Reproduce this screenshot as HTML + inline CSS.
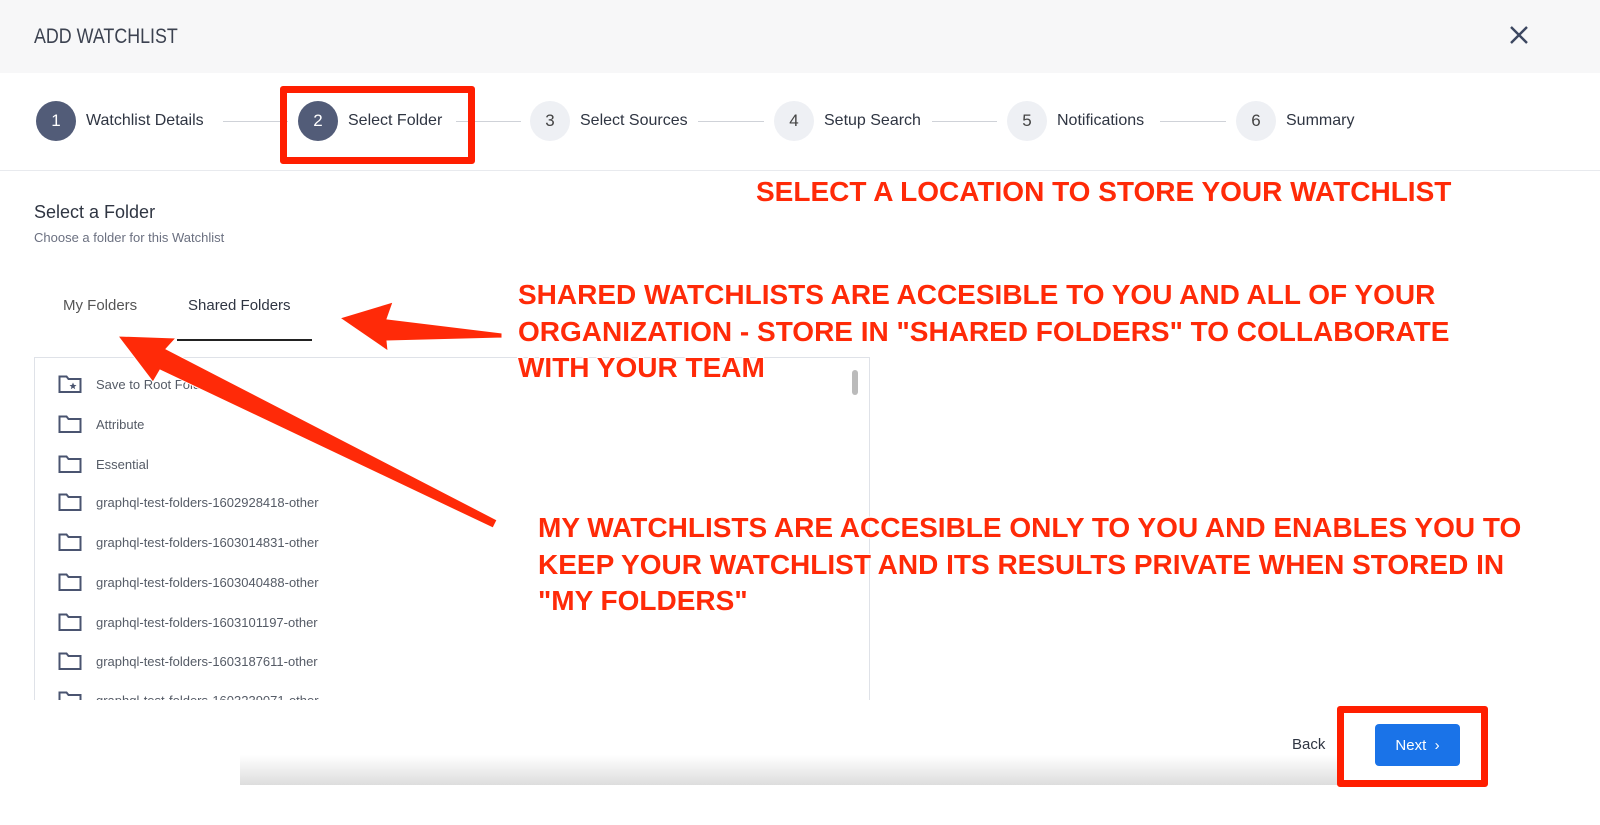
<!DOCTYPE html>
<html><head><meta charset="utf-8"><style>
body{margin:0;width:1600px;height:825px;background:#fff;font-family:"Liberation Sans",sans-serif;position:relative;overflow:hidden}
.hdr{position:absolute;left:0;top:0;width:1600px;height:73px;background:#f7f7f8}
.hdr .t{position:absolute;left:34px;top:25px;font-size:21px;color:#3c4250;transform:scaleX(.85);transform-origin:left}
.x{position:absolute;left:1508px;top:24px}
.step{position:absolute;top:101px;height:40px;display:flex;align-items:center;font-size:16px;color:#2f3542}
.c{width:40px;height:40px;border-radius:50%;background:#eef0f4;color:#444;display:flex;align-items:center;justify-content:center;font-size:17px;margin-right:10px}
.c.a{background:#525c78;color:#fff}
.line{position:absolute;top:121px;height:1px;background:#cfd2d8}
.sep{position:absolute;top:170px;left:0;width:1600px;height:1px;background:#e8eaee}
.ann{position:absolute;color:#ff2a08;font-weight:bold;font-size:28px;line-height:36.5px;text-shadow:-1px -1px 0 #fff,1px -1px 0 #fff,-1px 1px 0 #fff,1px 1px 0 #fff,0 0 3px #fff;white-space:nowrap}
.box{position:absolute;left:34px;top:357px;width:834px;height:343px;border:1px solid #dfe2e8;border-bottom:none}
.row{position:absolute;left:58px;height:20px;display:flex;align-items:center;font-size:13px;color:#555b66}
.row svg{margin-right:14px}
.red{position:absolute;border:7px solid #ff1e00;border-radius:3px}
</style></head><body>
<div class="hdr"><div class="t">ADD WATCHLIST</div>
<svg class="x" width="22" height="22" viewBox="0 0 22 22"><path d="M3 3L19 19M19 3L3 19" stroke="#3c4760" stroke-width="2.4"/></svg></div>

<div class="step" style="left:36px"><div class="c a">1</div>Watchlist Details</div>
<div class="line" style="left:223px;width:65px"></div>
<div class="step" style="left:298px"><div class="c a">2</div>Select Folder</div>
<div class="line" style="left:456px;width:65px"></div>
<div class="step" style="left:530px"><div class="c">3</div>Select Sources</div>
<div class="line" style="left:698px;width:66px"></div>
<div class="step" style="left:774px"><div class="c">4</div>Setup Search</div>
<div class="line" style="left:932px;width:65px"></div>
<div class="step" style="left:1007px"><div class="c">5</div>Notifications</div>
<div class="line" style="left:1160px;width:66px"></div>
<div class="step" style="left:1236px"><div class="c">6</div>Summary</div>
<div class="red" style="left:280px;top:86px;width:181px;height:64px"></div>
<div class="sep"></div>

<div style="position:absolute;left:34px;top:202px;font-size:18px;color:#2f3542">Select a Folder</div>
<div style="position:absolute;left:34px;top:230px;font-size:13px;color:#6b7080">Choose a folder for this Watchlist</div>

<div style="position:absolute;left:63px;top:297px;font-size:15px;color:#555">My Folders</div>
<div style="position:absolute;left:188px;top:297px;font-size:15px;color:#2f3542">Shared Folders</div>
<div style="position:absolute;left:177px;top:339px;width:135px;height:2px;background:#222"></div>

<div class="box"></div>
<div style="position:absolute;left:852px;top:370px;width:6px;height:25px;border-radius:3px;background:#bbb"></div>
<div class="row" style="top:374px"><svg width="24" height="20" viewBox="0 0 24 20"><path d="M1.5 2.5h7l2 2.5h12v13h-21z" fill="none" stroke="#4a5470" stroke-width="2"/><path d="M15 8.5l1 2.4 2.5.2-2 1.6.7 2.5-2.2-1.4-2.2 1.4.7-2.5-2-1.6 2.5-.2z" fill="#4a5470"/></svg>Save to Root Folder</div>
<div class="row" style="top:414px"><svg width="24" height="20" viewBox="0 0 24 20"><path d="M1.5 2.5h7l2 2.5h12v13h-21z" fill="none" stroke="#4a5470" stroke-width="2"/></svg>Attribute</div>
<div class="row" style="top:454px"><svg width="24" height="20" viewBox="0 0 24 20"><path d="M1.5 2.5h7l2 2.5h12v13h-21z" fill="none" stroke="#4a5470" stroke-width="2"/></svg>Essential</div>
<div class="row" style="top:492px"><svg width="24" height="20" viewBox="0 0 24 20"><path d="M1.5 2.5h7l2 2.5h12v13h-21z" fill="none" stroke="#4a5470" stroke-width="2"/></svg>graphql-test-folders-1602928418-other</div>
<div class="row" style="top:532px"><svg width="24" height="20" viewBox="0 0 24 20"><path d="M1.5 2.5h7l2 2.5h12v13h-21z" fill="none" stroke="#4a5470" stroke-width="2"/></svg>graphql-test-folders-1603014831-other</div>
<div class="row" style="top:572px"><svg width="24" height="20" viewBox="0 0 24 20"><path d="M1.5 2.5h7l2 2.5h12v13h-21z" fill="none" stroke="#4a5470" stroke-width="2"/></svg>graphql-test-folders-1603040488-other</div>
<div class="row" style="top:612px"><svg width="24" height="20" viewBox="0 0 24 20"><path d="M1.5 2.5h7l2 2.5h12v13h-21z" fill="none" stroke="#4a5470" stroke-width="2"/></svg>graphql-test-folders-1603101197-other</div>
<div class="row" style="top:651px"><svg width="24" height="20" viewBox="0 0 24 20"><path d="M1.5 2.5h7l2 2.5h12v13h-21z" fill="none" stroke="#4a5470" stroke-width="2"/></svg>graphql-test-folders-1603187611-other</div>
<div style="position:absolute;left:34px;top:688px;width:836px;height:12px;overflow:hidden"><div class="row" style="top:2px;left:24px"><svg width="24" height="20" viewBox="0 0 24 20"><path d="M1.5 2.5h7l2 2.5h12v13h-21z" fill="none" stroke="#4a5470" stroke-width="2"/></svg>graphql-test-folders-1603239071-other</div></div>
<div style="position:absolute;left:0;top:700px;width:1600px;height:125px;background:#fff"></div>
<div style="position:absolute;left:240px;top:755px;width:1100px;height:30px;background:linear-gradient(#fff,#ddd)"></div>
<div style="position:absolute;left:0;top:785px;width:1600px;height:40px;background:#fff"></div>

<div style="position:absolute;left:1292px;top:736px;font-size:15px;color:#2f3542">Back</div>
<div style="position:absolute;left:1375px;top:724px;width:85px;height:42px;background:#1a73e8;border-radius:4px;color:#fff;font-size:15px;display:flex;align-items:center;justify-content:center">Next&nbsp;&nbsp;›</div>
<div class="red" style="left:1337px;top:706px;width:137px;height:67px"></div>

<svg style="position:absolute;left:0;top:0" width="1600" height="825">
<polygon points="340,318 393,302 387,319 502,333 502,338 387,341 388,351" fill="#ff2a08" stroke="#fff" stroke-width="1"/>
<polygon points="118,336 176,338 166,349 497,520 493,528 160,370 153,382" fill="#ff2a08" stroke="#fff" stroke-width="1"/>
</svg>

<div class="ann" style="left:756px;top:174px">SELECT A LOCATION TO STORE YOUR WATCHLIST</div>
<div class="ann" style="left:518px;top:277px">SHARED WATCHLISTS ARE ACCESIBLE TO YOU AND ALL OF YOUR<br>ORGANIZATION - STORE IN "SHARED FOLDERS" TO COLLABORATE<br>WITH YOUR TEAM</div>
<div class="ann" style="left:538px;top:510px">MY WATCHLISTS ARE ACCESIBLE ONLY TO YOU AND ENABLES YOU TO<br>KEEP YOUR WATCHLIST AND ITS RESULTS PRIVATE WHEN STORED IN<br>"MY FOLDERS"</div>
</body></html>
